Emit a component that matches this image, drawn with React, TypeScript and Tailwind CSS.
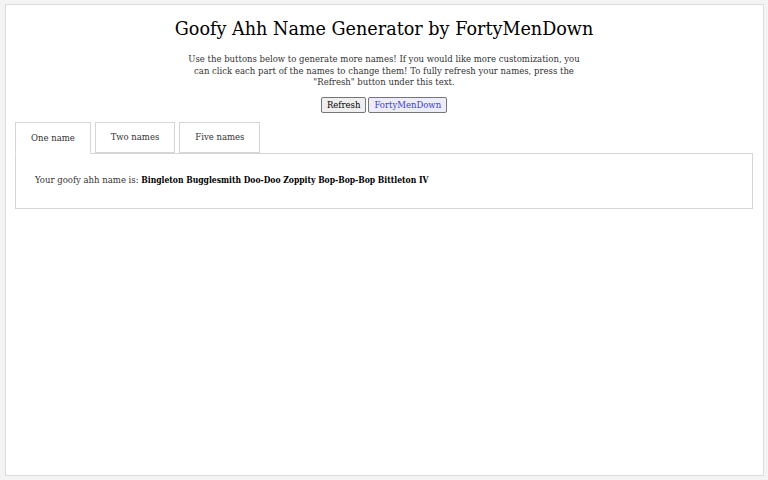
import React, { useState } from "react";

export default function App() {
  const [tab, setTab] = useState(0);
  const tabs = ["One name", "Two names", "Five names"];
  return (
    <div className="w-[768px] h-[480px] bg-[#f4f4f4] pt-[4px] pl-[5px] pr-[4px] pb-[4px]" style={{ fontFamily: '"DejaVu Serif", serif' }}>
      <div className="h-[472px] bg-white border border-[#dcdcdc] pl-[9px] pr-[10px]">
        <h1 className="text-[17.6px] leading-[22px] text-black text-center mt-[13px]">Goofy Ahh Name Generator by FortyMenDown</h1>
        <p className="text-[8.5px] leading-[11.7px] text-[#333] text-center w-[400px] mx-auto mt-[14px]">
          Use the buttons below to generate more names! If you would like more customization, you can click each part of the names to change them! To fully refresh your names, press the "Refresh" button under this text.
        </p>
        <div className="flex justify-center gap-[2px] mt-[8px]">
          <button className="text-[8.5px] leading-[11px] px-[5px] py-[1.5px] bg-[#efefef] border border-[#767676] rounded-[2px] text-black">Refresh</button>
          <button className="text-[8.5px] leading-[11px] px-[5px] py-[1.5px] bg-[#ececfa] border border-[#767676] rounded-[2px] text-[#3b3bd6]">FortyMenDown</button>
        </div>
        <div className="flex gap-[4px] mt-[9px]">
          {tabs.map((t, i) => (
            <div
              key={t}
              onClick={() => setTab(i)}
              className={
                "px-[15px] flex items-center justify-center text-[8.5px] text-[#333] border border-[#d6d6d6] bg-white " +
                (i === tab ? "border-b-white relative z-10 h-[32px]" : "h-[31px]")
              }
            >
              {t}
            </div>
          ))}
        </div>
        <div className="border border-[#d6d6d6] h-[56px] mt-[-1px] pl-[19px] pt-[20px] text-[8.5px] text-[#333]">
          Your goofy ahh name is: <b className="font-bold text-black" style={{ fontFamily: '"DejaVu Serif Condensed", "DejaVu Serif", serif', fontStretch: "condensed" }}>Bingleton Bugglesmith Doo-Doo Zoppity Bop-Bop-Bop Bittleton IV</b>
        </div>
      </div>
    </div>
  );
}
